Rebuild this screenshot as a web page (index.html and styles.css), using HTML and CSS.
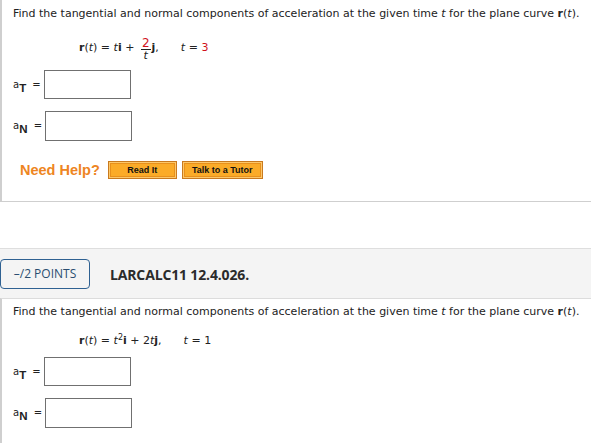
FILE: index.html
```html
<!DOCTYPE html>
<html>
<head>
<meta charset="utf-8">
<link rel="stylesheet" href="styles.css">
</head>
<body>
<div class="question first">
  <p class="prompt">Find the tangential and normal components of acceleration at the given time <i>t</i> for the plane curve <b>r</b>(<i>t</i>).</p>
  <div class="eq eq1"><b>r</b>(<i>t</i>) = <i>t</i><b>i</b> + <span class="frac"><span class="num red">2</span><span class="den"><i>t</i></span></span><b>j</b>,<span class="sp"></span><i>t</i> = <span class="red">3</span></div>
  <div class="row rowT"><span class="lbl">a<sub>T</sub> =</span><span class="box"></span></div>
  <div class="row rowN"><span class="lbl">a<sub>N</sub> =</span><span class="box"></span></div>
  <div class="help">
    <span class="need">Need Help?</span>
    <span class="btn read">Read It</span>
    <span class="btn tutor">Talk to a Tutor</span>
  </div>
</div>
<div class="spacer"></div>
<div class="qhead">
  <span class="points">–/2 POINTS</span>
  <span class="qid">LARCALC11 12.4.026.</span>
</div>
<div class="question second">
  <p class="prompt">Find the tangential and normal components of acceleration at the given time <i>t</i> for the plane curve <b>r</b>(<i>t</i>).</p>
  <div class="eq eq2"><b>r</b>(<i>t</i>) = <i>t</i><sup>2</sup><b>i</b> + 2<i>t</i><b>j</b>,<span class="sp"></span><i>t</i> = 1</div>
  <div class="row rowT"><span class="lbl">a<sub>T</sub> =</span><span class="box"></span></div>
  <div class="row rowN"><span class="lbl">a<sub>N</sub> =</span><span class="box"></span></div>
</div>
</body>
</html>
```
FILE: styles.css
```css
html, body {
  margin: 0;
  padding: 0;
  background: #fff;
}
body {
  font-family: "DejaVu Sans", Verdana, sans-serif;
  font-size: 11px;
  color: #222;
  width: 591px;
  overflow: hidden;
}
.question {
  border-left: 2px solid #cfcfcf;
  padding-left: 11px;
}
.first {
  border-bottom: 1px solid #cfcfcf;
  height: 202px;
  box-sizing: border-box;
  padding-top: 7px;
}
.second {
  border-top: 1px solid #dcdcdc;
  padding-top: 6px;
  height: 145px;
  box-sizing: border-box;
}
.prompt {
  margin: 0;
  line-height: 13px;
  white-space: nowrap;
}
.eq {
  margin-left: 66px;
  white-space: nowrap;
}
.eq1 { margin-top: 15px; height: 26px; line-height: 26px; }
.eq2 { margin-top: 15px; height: 16px; line-height: 16px; }
.eq sup { font-size: 8px; line-height: 0; vertical-align: 4px; }
.frac {
  display: inline-block;
  vertical-align: -8px;
  text-align: center;
  margin: 0 1px 0 3px;
  line-height: 11px;
}
.num { display: block; border-bottom: 1px solid #222; padding: 0 1px; font-size: 12px; }
.den { display: block; }
.sp { display: inline-block; width: 22px; }
.red { color: #d0121b; }
.row {
  display: flex;
  align-items: center;
  height: 29px;
}
.rowT { margin-top: 9px; }
.rowN { margin-top: 12px; }
.second .rowT { margin-top: 8px; }
.lbl {
  width: 31px;
  font-size: 10px;
  color: #222;
  white-space: nowrap;
}
.lbl sub {
  font-family: "Liberation Sans", Arial, sans-serif;
  font-weight: bold;
  font-size: 11.5px;
  vertical-align: -4px;
  line-height: 0;
  margin-right: 3px;
}
.rowN .lbl { width: 32px; }
.box {
  width: 85px;
  height: 27px;
  border: 1px solid #707070;
  display: block;
}
.rowN .box { height: 28px; }
.help {
  display: flex;
  align-items: center;
  margin-top: 21px;
  margin-left: 7px;
  height: 18px;
}
.need {
  font-family: "Liberation Sans", Arial, sans-serif;
  font-weight: bold;
  font-size: 14.5px;
  color: #ee8522;
  margin-right: 8px;
}
.btn {
  font-family: "Liberation Sans", Arial, sans-serif;
  font-weight: bold;
  font-size: 9px;
  color: #111;
  background: #fbab28;
  border: 1px solid #c97a1f;
  box-shadow: inset 0 0 0 1px #fdc86a, inset 0 0 0 2px #e8901c;
  height: 16px;
  line-height: 16px;
  text-align: center;
}
.read { width: 67px; margin-right: 5px; }
.tutor { width: 79px; }
.spacer { height: 46px; }
.qhead {
  background: #f4f4f4;
  border-top: 1px solid #dedede;
  height: 50px;
  display: flex;
  align-items: center;
  padding-top: 1px;
  box-sizing: border-box;
}
.points {
  font-family: "Open Sans", sans-serif;
  font-size: 12px;
  color: #2a4d70;
  border: 1px solid #2f6192;
  border-radius: 4px;
  width: 88px;
  height: 28px;
  line-height: 28px;
  text-align: center;
}
.qid {
  font-family: "Open Sans", sans-serif;
  font-weight: bold;
  font-size: 14px;
  color: #2b2b2b;
  margin-left: 20px;
  letter-spacing: -0.15px;
}
```
